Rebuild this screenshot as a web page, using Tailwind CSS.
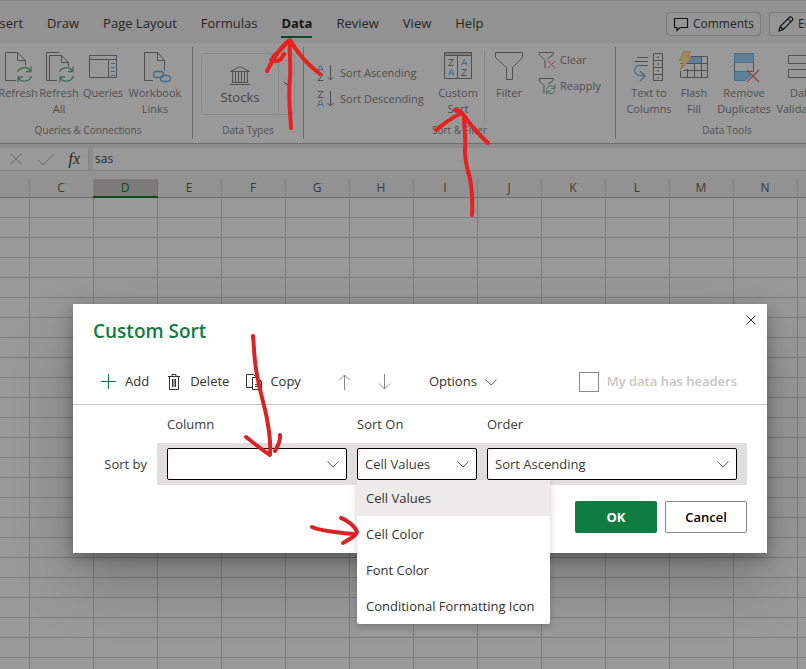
<!DOCTYPE html>
<html lang="en">
<head>
    <meta charset="UTF-8">
    <meta name="viewport" content="width=device-width, initial-scale=1.0">
    <title>Custom Sort</title>
    <script src="https://cdn.jsdelivr.net/npm/@tailwindcss/browser@4"></script>
</head>
<body class="relative h-screen overflow-hidden bg-[#999999] font-['Open_Sans','Noto_Sans',sans-serif] text-[13px] text-[#262626]">

    <!-- Ribbon tabs -->
    <header class="flex h-[43px] items-center justify-between overflow-hidden border-t border-[#8a8a8a] bg-[#929292] pt-1">
        <nav class="-ml-3 flex shrink-0 gap-6 whitespace-nowrap">
            <a href="#">Insert</a>
            <a href="#">Draw</a>
            <a href="#">Page Layout</a>
            <a href="#">Formulas</a>
            <a href="#" class="relative font-bold text-[#161616]">Data<span class="absolute inset-x-0 -bottom-1 h-[2px] bg-[#0a4a27]"></span></a>
            <a href="#">Review</a>
            <a href="#">View</a>
            <a href="#">Help</a>
        </nav>
        <div class="-mr-9 flex shrink-0 gap-2 text-xs">
            <button class="flex h-6 w-[95px] items-center justify-center gap-1 rounded border border-[#7b7b7b] bg-[#959595]">
                <svg class="size-4" viewBox="0 0 16 16" fill="none" stroke="#161616" stroke-width="1.2"><path d="M1.500 2.500h13v9H7l-3 3v-3H1.500z"/></svg>
                Comments
            </button>
            <button class="flex h-6 w-[73px] items-center gap-1 rounded border border-[#7b7b7b] bg-[#959595] pl-2">
                <svg class="size-4" viewBox="0 0 16 16" fill="none" stroke="#161616" stroke-width="1.2"><path d="M1 15l1.200-4.500L11.500 1.300c1.800-1.200 4 1 3 2.900L5.300 13.500zM10 2.800l3 3M2.200 10.500l3.100 3"/></svg>
                Editing
            </button>
        </div>
    </header>

    <!-- Ribbon commands -->
    <div class="flex h-[101px] overflow-hidden whitespace-nowrap border-b border-[#6e6e6e] pt-1 text-[11px] leading-4 text-[#505050]">
        <section class="flex w-[193px] shrink-0 flex-col border-r border-[#6b6b6b] pt-1 mb-1">
            <div class="flex h-[71px]">
                <button class="flex w-9 shrink-0 flex-col items-center gap-[2px]">
                    <svg class="size-8" viewBox="0 0 32 32" fill="none" stroke="#505050"><path d="M14 29.500H3.500v-28h12l8 8v5M15.500 1.500v8h8"/><path stroke="#456b50" stroke-width="1.300" d="M15.500 21c2-5 10-6 13-1M29 15.500v5h-5M29.500 25c-2 6-10 7-13 2M16 31v-5h5"/></svg>
                    Refresh
                </button>
                <button class="flex w-[46px] shrink-0 flex-col items-center gap-[2px]">
                    <svg class="size-8" viewBox="0 0 32 32" fill="none" stroke="#505050"><path d="M6.500 29.500h-3v-28h13M14 29.500H6.500v-25h12l7 7v4M18.500 4.500v7h7"/><path stroke="#456b50" stroke-width="1.300" d="M16.500 21c2-5 10-6 13-1M30 15.500v5h-5M30.500 25c-2 6-10 7-13 2M17 31v-5h5"/></svg>
                    <span>Refresh<br>All</span>
                </button>
                <button class="flex w-[42px] shrink-0 flex-col items-center gap-[2px]">
                    <svg class="size-8" viewBox="0 0 32 32" fill="none" stroke="#505050"><path d="M2.500 4.500h27v22h-27zM2.500 8.500h27M21.500 8.500v18"/><path stroke="#4a6b85" d="M24 12.500h4M24 16.500h4M24 20.500h4M24 24.500h4"/></svg>
                    Queries
                </button>
                <button class="flex w-[62px] shrink-0 flex-col items-center gap-[2px]">
                    <svg class="size-8" viewBox="0 0 32 32" fill="none" stroke="#505050"><path d="M14 29.500H5.500v-28h13l7 8v10M18.500 1.500v8h7"/><g stroke="#4a6b85" stroke-width="1.300"><rect x="14.500" y="20.500" width="10" height="6" rx="3"/><rect x="21.500" y="24.500" width="10" height="6" rx="3"/></g></svg>
                    <span>Workbook<br>Links</span>
                </button>
            </div>
            <div class="pr-4 text-center text-[10px]">Queries &amp; Connections</div>
        </section>

        <section class="flex w-[111px] shrink-0 flex-col border-r border-[#6b6b6b] pt-1 mb-1">
            <div class="h-[71px] px-2">
                <div class="mt-[2px] flex h-[62px] rounded border border-[#8a8a8a]">
                    <button class="flex flex-1 flex-col items-center justify-center gap-[2px] text-[13px] text-[#464646]">
                        <svg class="size-6" viewBox="0 0 24 24" fill="none" stroke="#505050"><path d="M2.500 8.500L12 3.500l9.500 5zM4.500 9v10M7.500 9v10M10.500 9v10M13.500 9v10M16.500 9v10M19.500 9v10M3.500 19.500h17M1.500 21.500h21"/></svg>
                        Stocks
                    </button>
                    <button class="flex w-4 items-center justify-center border-l border-[#8a8a8a]" aria-label="More data types">
                        <svg class="size-2" viewBox="0 0 8 8" fill="none" stroke="#404040"><path d="M1 2l3 3 3-3"/></svg>
                    </button>
                </div>
            </div>
            <div class="text-center text-[10px]">Data Types</div>
        </section>

        <section class="flex w-[312px] shrink-0 flex-col border-r border-[#6b6b6b] pt-1 mb-1">
            <div class="flex h-[71px] pl-3">
                <div class="flex w-[116px] shrink-0 flex-col gap-2 pt-[13px]">
                    <button class="flex items-center gap-[6px]">
                        <svg class="size-[18px]" viewBox="0 0 18 18" fill="none" stroke="#505050"><path stroke="#4a6b85" d="M1.500 7.500l2.500-6h1l2.500 6M2.500 5.500h4"/><path d="M2 10.500h5l-5 6h5.500M14.500 1v15M11.500 13l3 3 3-3"/></svg>
                        Sort Ascending
                    </button>
                    <button class="flex items-center gap-[6px]">
                        <svg class="size-[18px]" viewBox="0 0 18 18" fill="none" stroke="#505050"><path d="M2 1.500h5l-5 6h5.500M14.500 1v15M11.500 13l3 3 3-3"/><path stroke="#4a6b85" d="M1.500 16.500l2.500-6h1l2.500 6M2.500 14.500h4"/></svg>
                        Sort Descending
                    </button>
                </div>
                <button class="flex w-[53px] shrink-0 flex-col items-center gap-[2px] border-r border-[#888888]">
                    <svg class="size-8" viewBox="0 0 32 32" fill="none" stroke="#505050"><path fill="#7c7c7c" d="M2.500 1.500h27v3h-27z"/><path d="M2.500 4.500h27v23h-27zM15.500 4.500v23M6.500 8.500h5l-5 6h5M19.500 18.500h5l-5 6h5"/><path stroke="#4a6b85" d="M19.500 14.500l2.500-6h.5l2.500 6M20.500 12.500h4M6.500 24.500l2.500-6h.5l2.500 6M7.500 22.500h4"/></svg>
                    <span>Custom<br>Sort</span>
                </button>
                <button class="flex w-12 shrink-0 flex-col items-center gap-[2px]">
                    <svg class="size-8" viewBox="0 0 32 32" fill="none" stroke="#505050"><path d="M2.500 1.500h27v5l-10 10v12h-6v-12l-11-10z"/></svg>
                    Filter
                </button>
                <div class="flex flex-col gap-2 pl-[5px]">
                    <button class="flex items-center gap-1">
                        <svg class="size-[18px]" viewBox="0 0 18 18" fill="none" stroke="#505050"><path d="M9 8l6.500-4.500v-2H1.500V4L7 9.500v7h1"/><path stroke="#854a50" d="M10 10l7 7M17 10l-7 7"/></svg>
                        Clear
                    </button>
                    <button class="flex items-center gap-1">
                        <svg class="size-[18px]" viewBox="0 0 18 18" fill="none" stroke="#505050"><path d="M10 7l5.500-3.500v-2H1.500V4L6 8.500v8"/><path stroke="#456b50" d="M8.500 12c1-4 7-4 8-1M17 7.500v4h-4M17 13.500c-1 4-7 4-8 1M8.500 17.500v-3.500h4"/></svg>
                        Reapply
                    </button>
                </div>
            </div>
            <div class="text-center text-[10px]">Sort &amp; Filter</div>
        </section>

        <section class="flex w-[222px] shrink-0 flex-col pt-1">
            <div class="flex h-[71px] pl-2">
                <button class="flex w-[50px] shrink-0 flex-col items-center gap-[2px]">
                    <svg class="size-8" viewBox="0 0 32 32" fill="none" stroke="#505050"><path d="M4 6.500h11M2 10.500h13M6 14.500h9M20.500 2.500h9v27h-9zM20.500 9.500h9M20.500 16.500h9M20.500 23.500h9M24 6h2M24 13h2M24 20h2M24 27h2"/><path stroke="#4a6b85" stroke-width="1.300" d="M6 14c-7 3-6 11 5 11M7 20l5 5-5 5"/></svg>
                    <span>Text to<br>Columns</span>
                </button>
                <button class="flex w-[40px] shrink-0 flex-col items-center gap-[2px]">
                    <svg class="size-8" viewBox="0 0 32 32" fill="none" stroke="#505050"><path fill="#5f7f99" stroke="none" d="M12 5h11v7H10z"/><path d="M13 5.500h16.500v21h-27V20M2.500 12.500h27M5 19.500h24.500M9.500 18v8.500M16.500 12v14.500M23.500 5v21.500"/><path fill="#a38a5c" stroke="#94784a" d="M5.500.5h7l-3 6h4l-11 12 3-9h-4z"/></svg>
                    <span>Flash<br>Fill</span>
                </button>
                <button class="flex w-[60px] shrink-0 flex-col items-center gap-[2px]">
                    <svg class="size-8" viewBox="0 0 32 32" fill="none" stroke="#505050"><path d="M6.500 2.500h19v18h-19z"/><path fill="#5f7f99" stroke="#4a6b85" d="M6.500 2.500h19v9h-19zM6.500 20.500h12l4 4-5 5h-11z"/><path stroke="#854a50" stroke-width="1.300" d="M19 19l12 12M31 19L19 31"/></svg>
                    <span>Remove<br>Duplicates</span>
                </button>
                <button class="flex w-[56px] shrink-0 flex-col items-center gap-[2px]">
                    <svg class="size-8" viewBox="0 0 32 32" fill="none" stroke="#505050"><path d="M26 4.500H2.500v8H26zM26 18.500H2.500v8H26z"/><path stroke="#456b50" d="M20 8l3 3 6-6"/><circle stroke="#854a50" cx="25" cy="24" r="4"/></svg>
                    <span>Data<br>Validation</span>
                </button>
            </div>
            <div class="text-center text-[10px]">Data Tools</div>
        </section>
    </div>

    <!-- Formula bar -->
    <div class="flex h-[27px] gap-1 border-b border-[#838383] bg-[#8d8d8d] pt-1">
        <div class="flex w-[89px] items-center justify-between border-r border-[#858585] bg-[#999999] px-2">
            <svg class="size-4" viewBox="0 0 16 16" fill="none" stroke="#6c6c6c"><path d="M2 2l12 12M14 2L2 14"/></svg>
            <svg class="size-4" viewBox="0 0 16 16" fill="none" stroke="#6c6c6c"><path d="M0 9l5 5L16 3"/></svg>
            <span class="font-['Liberation_Serif',serif] text-base italic">fx</span>
        </div>
        <input type="text" value="sas" aria-label="Formula" class="min-w-0 flex-1 bg-[#999999] px-[2px] text-xs outline-none">
    </div>

    <!-- Sheet -->
    <div class="overflow-hidden bg-[#929292] pt-2">
        <table class="w-[861px] table-fixed border-collapse">
            <thead>
                <tr id="columnRow" class="h-[18px] text-xs leading-4 text-[#3a3a3a]"></tr>
            </thead>
            <tbody id="rows" class="bg-[#999999]"></tbody>
        </table>
    </div>

    <!-- Custom Sort dialog -->
    <div role="dialog" aria-labelledby="dialogTitle" class="absolute top-[304px] right-[39px] left-[73px] bg-white pb-5 shadow-[0_26px_58px_rgba(0,0,0,0.22),0_5px_14px_rgba(0,0,0,0.3)]">
        <div class="flex items-start justify-between pr-1 pl-5">
            <h1 id="dialogTitle" class="pt-[13px] text-[19px] leading-7 font-semibold text-[#107c41]">Custom Sort</h1>
            <button aria-label="Close" class="mt-1 flex size-6 items-center justify-center">
                <svg class="size-[10px]" viewBox="0 0 10 10" fill="none" stroke="#323130"><path d="M.5.5l9 9M9.500.5l-9 9"/></svg>
            </button>
        </div>

        <div class="mt-3 flex h-12 items-center border-b border-[#c8c6c4] pt-[2px] pr-[30px] pl-7 text-[#323130]">
            <button class="mr-[17px] flex items-center gap-2">
                <svg class="size-4" viewBox="0 0 16 16" fill="none" stroke="#107c41"><path d="M7.500 0v15M0 7.500h15"/></svg>
                Add
            </button>
            <button class="mr-[17px] flex items-center gap-2">
                <svg class="size-4" viewBox="0 0 16 16" fill="none" stroke="#323130"><path d="M2 2.500h12M6 2.500v-2h4v2M3.500 2.500v13h9v-13M6.500 5v8M8 5v8M9.500 5v8"/></svg>
                Delete
            </button>
            <button class="mr-9 flex items-center gap-2">
                <svg class="size-4" viewBox="0 0 16 16" fill="none" stroke="#323130"><path d="M6 13.500H.5V.5h7l2 2M6.500 3.500h5l4 4v8h-9zM11.500 3.500v4h4M9 10.500h4M9 12.500h4"/></svg>
                Copy
            </button>
            <button aria-label="Move up" class="mr-6">
                <svg class="size-4" viewBox="0 0 16 16" fill="none" stroke="#8a8886"><path d="M7.500 16V1M2 6.500L7.500 1 13 6.500"/></svg>
            </button>
            <button aria-label="Move down" class="mr-9">
                <svg class="size-4" viewBox="0 0 16 16" fill="none" stroke="#8a8886"><path d="M7.500 0v15M2 9.500L7.500 15 13 9.500"/></svg>
            </button>
            <button class="flex items-center gap-2">
                Options
                <svg class="size-3" viewBox="0 0 12 12" fill="none" stroke="#605e5c"><path d="M.5 3.500L6 9l5.500-5.500"/></svg>
            </button>
            <label class="ml-auto flex items-center gap-2 font-semibold text-[#c8c6c4]">
                <input type="checkbox" class="size-5 appearance-none border border-[#8a8886]">
                My data has headers
            </label>
        </div>

        <div class="flex h-[38px] items-center gap-[10px] pt-[2px] pr-[30px] pl-[94px] text-[#3b3a39]">
            <label for="sortColumn" class="w-[180px]">Column</label>
            <label for="sortOn" class="w-[120px]">Sort On</label>
            <label for="sortOrder" class="flex-1">Order</label>
        </div>

        <div class="flex items-center pr-5 text-[#3b3a39]">
            <div class="w-[84px] shrink-0 pt-[2px] pr-[10px] text-right">Sort by</div>
            <div class="flex flex-1 gap-[10px] bg-[#e1dfdd] px-[10px] py-[5px]">
                <div class="relative w-[180px]">
                    <select id="sortColumn" class="h-8 w-full appearance-none rounded-xs border border-black bg-white px-[7px] pt-[2px]"><option></option></select>
                    <svg class="pointer-events-none absolute top-[10px] right-2 size-3" viewBox="0 0 12 12" fill="none" stroke="#605e5c"><path d="M.5 3.500L6 9l5.500-5.500"/></svg>
                </div>
                <div class="relative w-[120px]">
                    <select id="sortOn" class="h-8 w-full appearance-none rounded-xs border border-black bg-white px-[7px] pt-[2px]"><option>Cell Values</option></select>
                    <svg class="pointer-events-none absolute top-[10px] right-2 size-3" viewBox="0 0 12 12" fill="none" stroke="#605e5c"><path d="M.5 3.500L6 9l5.500-5.500"/></svg>
                    <ul role="listbox" aria-label="Sort On" class="absolute top-full left-0 w-[193px] rounded-xs bg-white whitespace-nowrap text-[#323130] shadow-[0_3px_7px_rgba(0,0,0,0.2)]">
                        <li role="option" aria-selected="true" class="flex h-9 items-center bg-[#edebe9] px-[9px] pt-[2px]">Cell Values</li>
                        <li role="option" class="flex h-9 items-center px-[9px] pt-[2px]">Cell Color</li>
                        <li role="option" class="flex h-9 items-center px-[9px] pt-[2px]">Font Color</li>
                        <li role="option" class="flex h-9 items-center px-[9px] pt-[2px]">Conditional Formatting Icon</li>
                    </ul>
                </div>
                <div class="relative flex-1">
                    <select id="sortOrder" class="h-8 w-full appearance-none rounded-xs border border-black bg-white px-[7px] pt-[2px]"><option>Sort Ascending</option></select>
                    <svg class="pointer-events-none absolute top-[10px] right-2 size-3" viewBox="0 0 12 12" fill="none" stroke="#605e5c"><path d="M.5 3.500L6 9l5.500-5.500"/></svg>
                </div>
            </div>
        </div>

        <div class="mt-4 flex justify-end gap-2 pr-5">
            <button class="h-8 w-[82px] rounded-xs bg-[#107c41] pt-[2px] font-bold text-white">OK</button>
            <button class="h-8 w-[82px] rounded-xs border border-[#8a8886] bg-white pt-[2px] font-semibold text-black">Cancel</button>
        </div>
    </div>

    <!-- Hand drawn arrows -->
    <svg class="pointer-events-none absolute top-0 left-0 h-[669px] w-[806px]" viewBox="0 0 806 669" fill="none" stroke="#e8201f" stroke-width="4" stroke-linecap="round" stroke-linejoin="round">
        <path d="M291 128c-1-20-3-30-1-50 1-15-1-25 0-38M267 71c5-10 14-25 23-31 8 14 18 25 30 34M271 60c2 1 7 2 10-1l3-5M273 57l12-12"/>
        <path d="M472 215c1-10 0-20-1-31-2-12-6-18-6-34 1-14-1-24-1-33M436 130c8-6 16-13 26-17 7 10 15 20 26 30M455 110c4 0 7 2 9 6"/>
        <path stroke="#d82424" d="M253 336c1 10 1 20 3 33 3 20 8 34 11 50 2 12 4 20 3 35M246 437c8 6 16 13 24 18M275 451c2-4 6-10 5-16"/>
        <path stroke="#d82424" d="M312 527c10 5 26 5 41 7M341 518c6 2 14 8 16 14-1 4-7 7-14 11"/>
    </svg>

    <script>
        const columns = ['', 'C', 'D', 'E', 'F', 'G', 'H', 'I', 'J', 'K', 'L', 'M', 'N', 'O'];
        const columnRow = document.getElementById('columnRow');
        const rows = document.getElementById('rows');

        columns.forEach(function(name, i) {
            const th = document.createElement('th');
            th.textContent = name;
            th.className = i === 0 ? 'w-[29px]' : 'w-16';
            if (name === 'D') {
                th.className += ' border-x border-b-2 border-x-[#6e6e6e] border-b-[#0a4a27] bg-[#7d7b79] font-medium text-[#0a4a27]';
            } else {
                th.className += ' border-r border-b border-r-[#808080] border-b-[#6e6e6e] font-normal';
            }
            columnRow.appendChild(th);
        });

        for (let r = 0; r < 24; r++) {
            const tr = document.createElement('tr');
            tr.className = 'h-5';
            columns.forEach(function() {
                const td = document.createElement('td');
                td.className = 'border-r border-b border-[#7c7c7c]';
                tr.appendChild(td);
            });
            rows.appendChild(tr);
        }
    </script>
</body>
</html>
